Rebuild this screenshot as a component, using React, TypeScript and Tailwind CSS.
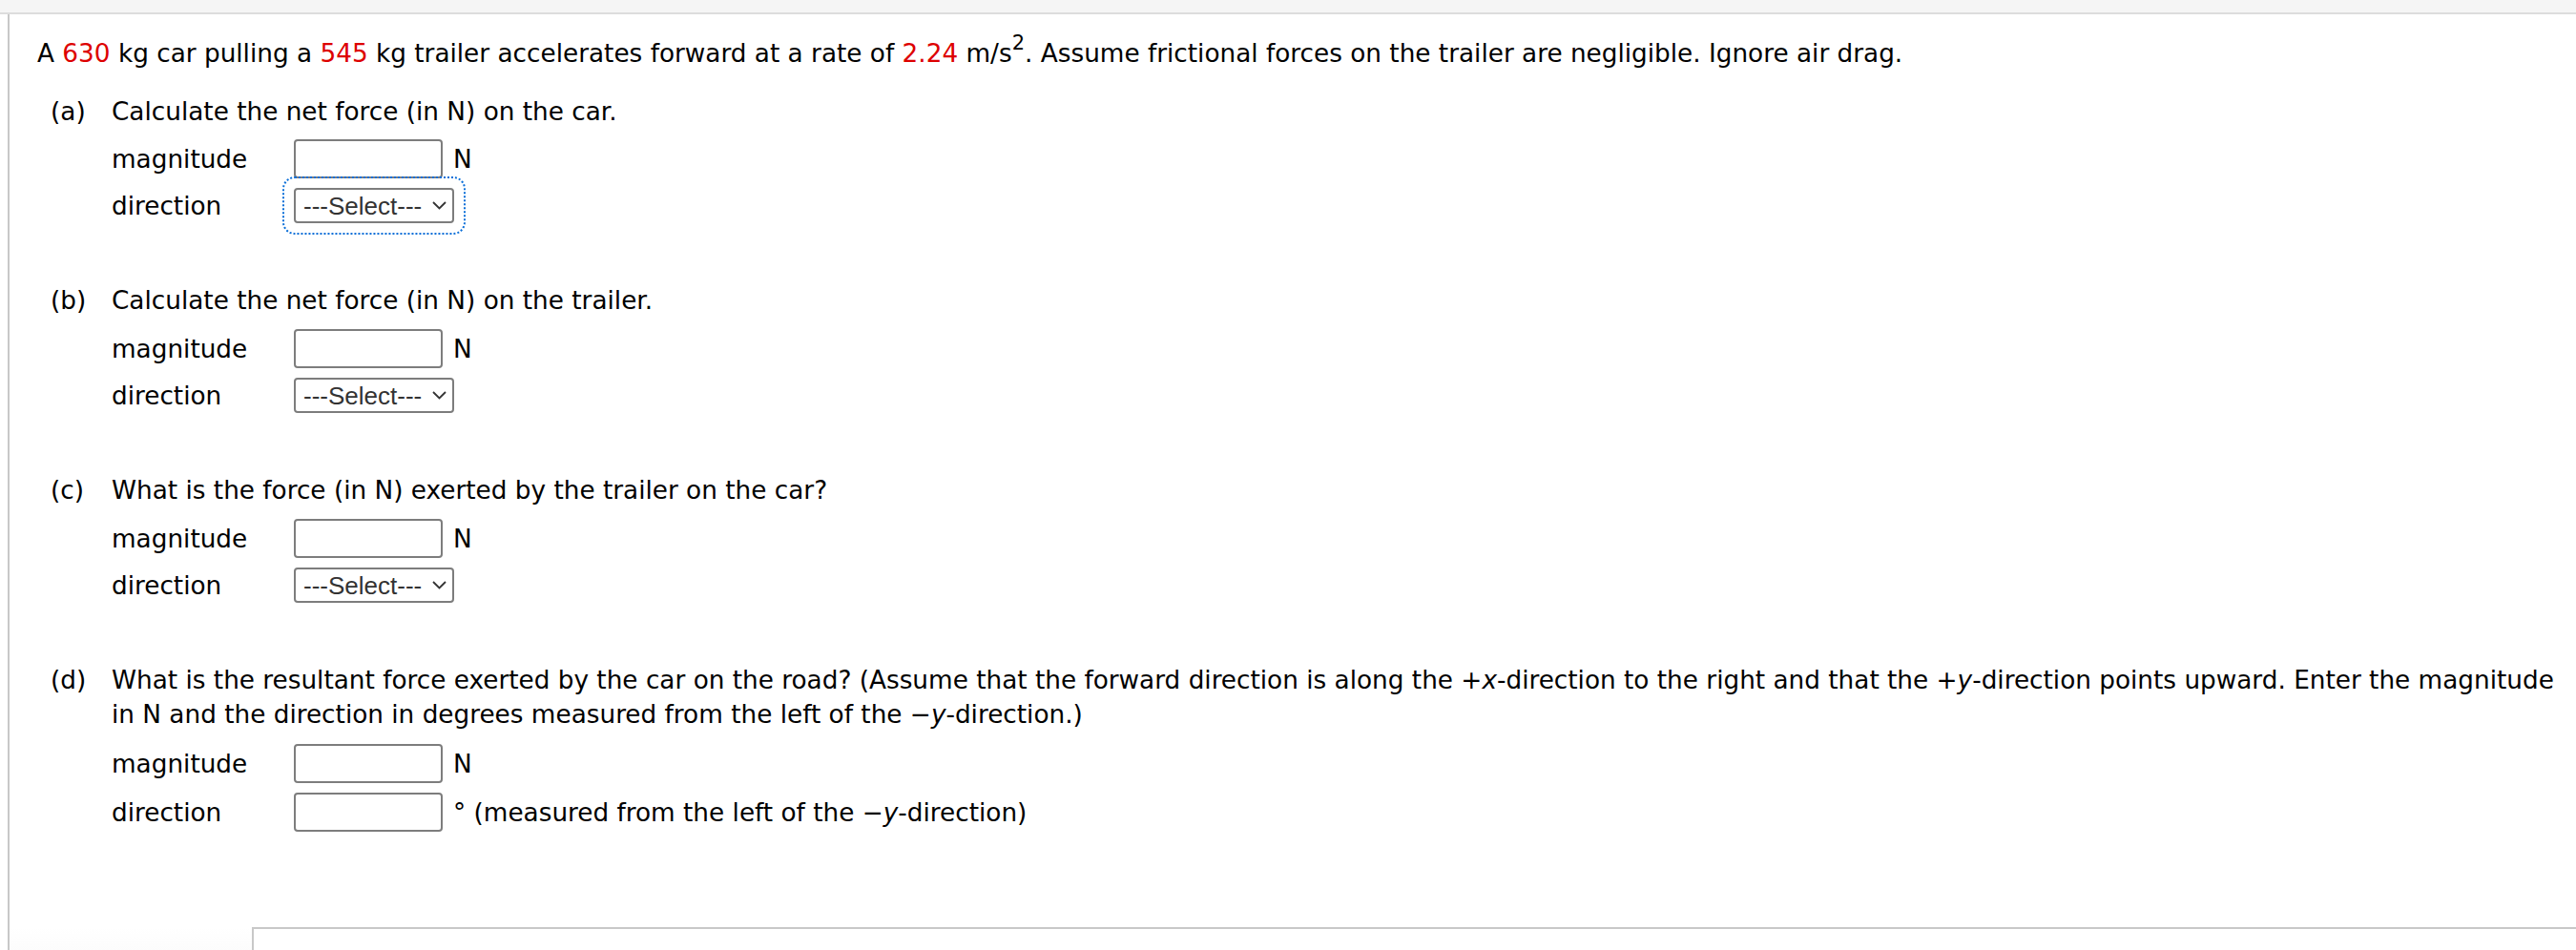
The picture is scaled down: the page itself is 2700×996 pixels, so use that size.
const RED = "text-[#dd0000]";

function TextBox() {
  return (
    <input
      type="text"
      className="h-[41px] w-[156px] rounded-[4px] border-2 border-[#7d7d7d] bg-white px-2 font-['Liberation_Sans',Arial,sans-serif] text-[24px] outline-none"
    />
  );
}

function SelectBox({ focused }: { focused?: boolean }) {
  return (
    <div
      className={`relative h-[37px] w-[168px] ${
        focused ? "rounded-[1px] outline-2 outline-offset-[10px] outline-dotted outline-[#0b6fd8]" : ""
      }`}
    >
      <select
        defaultValue=""
        className="h-full w-full appearance-none rounded-[4px] border-2 border-[#7d7d7d] bg-white pl-[8px] font-['Liberation_Sans',Arial,sans-serif] text-[26px] leading-none text-[#333333] outline-none"
      >
        <option value="">---Select---</option>
        <option value="forward">forward</option>
        <option value="backward">backward</option>
        <option value="zero">The magnitude is zero.</option>
      </select>
      <svg
        width="15"
        height="9"
        viewBox="0 0 15 9"
        className="pointer-events-none absolute right-[8px] top-[14px]"
      >
        <polyline points="1,1 7.5,7.5 14,1" fill="none" stroke="#333333" strokeWidth="1.8" />
      </svg>
    </div>
  );
}

function Part({
  letter,
  title,
  second,
  titleGap = "mt-[12px]",
}: {
  letter: string;
  title: React.ReactNode;
  second: React.ReactNode;
  titleGap?: string;
}) {
  return (
    <div className="flex pl-[14px]">
      <div className="w-[64px] shrink-0">({letter})</div>
      <div className="flex-1">
        <div className="whitespace-nowrap">{title}</div>
        <div className={`${titleGap} flex h-[41px] items-center`}>
          <span className="w-[191px] shrink-0">magnitude</span>
          <TextBox />
          <span className="ml-[11px]">N</span>
        </div>
        <div className="mt-[10px] flex min-h-[37px] items-center">
          <span className="w-[191px] shrink-0">direction</span>
          {second}
        </div>
      </div>
    </div>
  );
}

export default function App() {
  return (
    <div className="flex h-screen flex-col overflow-hidden bg-white font-['DejaVu_Sans',Verdana,sans-serif] text-[26.3px] leading-[36px] text-black">
      {/* top strip */}
      <div className="h-[15px] shrink-0 border-b-2 border-[#dddddd] bg-[#f5f5f5]" />

      <div className="ml-[8px] flex flex-1 flex-col border-l-2 border-[#c8c8c8]">
        <div className="pl-[29px] pt-[23px]">
          <p className="whitespace-nowrap">
            A <span className={RED}>630</span> kg car pulling a <span className={RED}>545</span> kg trailer
            accelerates forward at a rate of <span className={RED}>2.24</span> m/s
            <sup className="-top-[0.6em] text-[21px]">2</sup>. Assume frictional forces on the trailer are
            negligible. Ignore air drag.
          </p>

          <div className="mt-[25px] flex flex-col gap-[63px]">
            <Part
              letter="a"
              title="Calculate the net force (in N) on the car."
              titleGap="mt-[11px]"
              second={<SelectBox focused />}
            />
            <Part letter="b" title="Calculate the net force (in N) on the trailer." second={<SelectBox />} />
            <Part
              letter="c"
              title="What is the force (in N) exerted by the trailer on the car?"
              second={<SelectBox />}
            />
            <Part
              letter="d"
              titleGap="mt-[13px]"
              title={
                <>
                  What is the resultant force exerted by the car on the road? (Assume that the forward direction is
                  along the +<i>x</i>-direction to the right and that the +<i>y</i>-direction points upward. Enter the
                  magnitude
                  <br />
                  in N and the direction in degrees measured from the left of the −<i>y</i>-direction.)
                </>
              }
              second={
                <>
                  <TextBox />
                  <span className="ml-[11px] whitespace-nowrap">
                    ° (measured from the left of the −<i>y</i>-direction)
                  </span>
                </>
              }
            />
          </div>
        </div>

        {/* footer */}
        <div className="mt-[100px] flex flex-1 items-start bg-gradient-to-b from-white to-[#f6f6f6] pl-[26px]">
          <div className="mt-[24px] h-[40px] w-[201px] rounded-t-[3px] border-t-2 border-[#777777] bg-[#f3f3f3]" />
          <div className="ml-[27px] h-[80px] flex-1 border-l-2 border-t-2 border-[#c8c8c8] bg-white" />
        </div>
      </div>
    </div>
  );
}
